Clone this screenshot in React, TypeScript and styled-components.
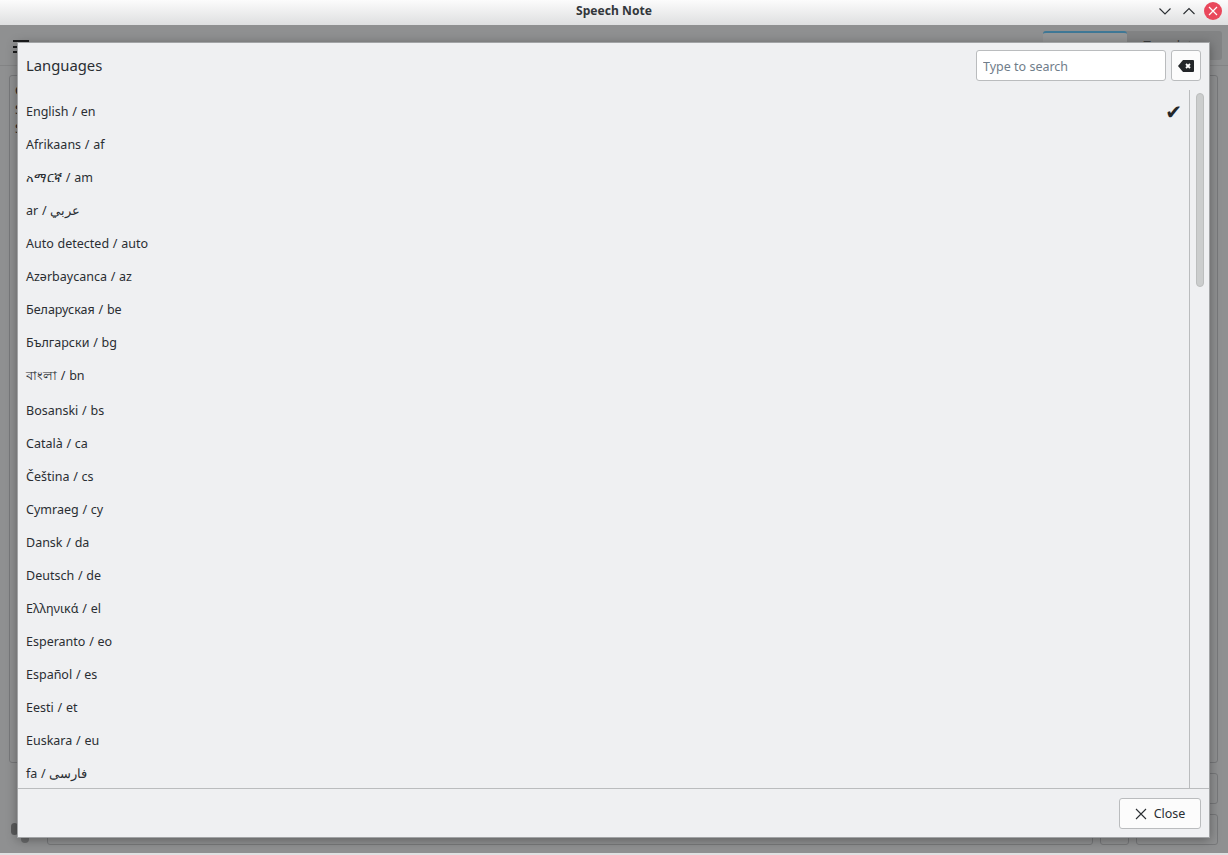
import React from 'react';
import styled, { createGlobalStyle } from 'styled-components';

const Global = createGlobalStyle`
  html, body { margin: 0; padding: 0; width: 1228px; height: 855px; overflow: hidden; background: #8f9091; }
  * { box-sizing: border-box; }
`;

const Window = styled.div`
  position: relative;
  width: 1228px;
  height: 855px;
  display: flex;
  flex-direction: column;
  font-family: "Noto Sans", "Noto Sans CJK SC", sans-serif;
  color: #2a2e32;
  overflow: hidden;
`;

const TitleBar = styled.div`
  height: 25px;
  flex: none;
  display: flex;
  align-items: flex-start;
  justify-content: center;
  padding-top: 2px;
  position: relative;
  background: linear-gradient(#fcfcfc, #dedfe0);
`;

const Title = styled.div`
  font-size: 12.1px;
  line-height: 17px;
  font-weight: 700;
  color: #33373b;
`;

const WinControls = styled.div`
  position: absolute;
  right: 6px;
  top: 2px;
  display: flex;
  align-items: center;
  gap: 6px;
`;

const CloseCircle = styled.div`
  width: 18px;
  height: 18px;
  border-radius: 50%;
  background: #e9475b;
  display: flex;
  align-items: center;
  justify-content: center;
`;

const Backdrop = styled.div`
  flex: 1;
  min-height: 0;
  background: #8f9091;
  display: flex;
  flex-direction: column;
  padding: 0 10px 10px 9px;
`;

const BackToolbar = styled.div`
  height: 41px;
  flex: none;
  margin: 0 -10px 0 -9px;
  padding: 6px 6px 0 13px;
  display: flex;
  align-items: flex-start;
  border-bottom: 1px solid #838485;
`;

const Burger = styled.div`
  width: 16px;
  height: 13px;
  margin-top: 9px;
  flex: none;
  border-top: 2px solid #1c1d1e;
  border-bottom: 2px solid #1c1d1e;
  position: relative;
  &::after {
    content: "";
    position: absolute;
    left: 0;
    right: 0;
    top: 3.5px;
    height: 2px;
    background: #1c1d1e;
  }
`;

const BackLabel = styled.div`
  flex: 1;
  margin: 8px 0 0 22px;
  font-size: 13px;
  line-height: 18px;
  color: #3c3d3e;
`;

const BackTabs = styled.div`
  display: flex;
  height: 29px;
  background: #828384;
  border-radius: 3px;
`;

const BackTab = styled.div<{ $active?: boolean }>`
  width: ${(p) => (p.$active ? '84px' : '95px')};
  border-radius: 3px 3px 0 0;
  background: ${(p) => (p.$active ? '#959697' : 'transparent')};
  border-top: ${(p) => (p.$active ? '2px solid #3f7896' : 'none')};
  font-size: 13px;
  line-height: 28px;
  text-align: center;
  color: #3c3d3e;
`;

const BackPanel = styled.div`
  flex: 1;
  margin-top: 9px;
  border: 1px solid #77787a;
  border-radius: 3px;
  padding: 5px 5px;
  font-size: 13px;
  line-height: 19px;
  color: #222;
`;

const BackRow = styled.div`
  flex: none;
  display: flex;
  justify-content: flex-end;
  margin-top: 10px;
`;

const BackControls = styled.div`
  flex: none;
  display: flex;
  align-items: flex-end;
  gap: 7px;
  margin-top: 10px;
  height: 31px;
`;

const BackBlobs = styled.div`
  width: 19px;
  flex: none;
  margin-left: 2px;
  margin-right: 10px;
  height: 31px;
  display: flex;
  align-items: flex-start;
  gap: 3px;
`;

const BackBlob = styled.div<{ $low?: boolean }>`
  width: ${(p) => (p.$low ? '8px' : '7px')};
  height: 12px;
  margin-top: ${(p) => (p.$low ? '17px' : '9px')};
  border-radius: 4px;
  flex: none;
  background: ${(p) => (p.$low ? '#6a6b6c' : '#5a5b5c')};
`;

const BackBox = styled.div<{ $w?: number }>`
  height: 31px;
  flex: ${(p) => (p.$w ? 'none' : '1')};
  width: ${(p) => (p.$w ? `${p.$w}px` : 'auto')};
  border: 1px solid #77787a;
  border-radius: 3px;
`;

const BottomEdge = styled.div`
  position: absolute;
  left: 0;
  right: 0;
  bottom: 0;
  height: 2px;
  background: #e0e1e2;
`;

const Dialog = styled.div`
  position: absolute;
  left: 17px;
  top: 42px;
  width: 1193px;
  height: 796px;
  background: #eff0f2;
  border: 1px solid #a2a4a6;
  box-shadow: 0 2px 10px rgba(0, 0, 0, 0.35);
  display: flex;
  flex-direction: column;
`;

const DialogHeader = styled.div`
  height: 47px;
  flex: none;
  display: flex;
  align-items: flex-start;
  justify-content: space-between;
  padding: 7px 8px 0 8px;
`;

const Heading = styled.div`
  font-size: 14.8px;
  line-height: 30px;
  color: #2a2e32;
`;

const SearchGroup = styled.div`
  display: flex;
  gap: 5px;
`;

const SearchInput = styled.input`
  width: 190px;
  height: 31px;
  padding: 1px 6px 0;
  background: #fff;
  border: 1px solid #babcbe;
  border-radius: 3px;
  font: 12.5px "Noto Sans", sans-serif;
  color: #2a2e32;
  outline: none;
  &::placeholder { color: #707d8a; opacity: 1; }
`;

const ClearButton = styled.div`
  width: 30px;
  height: 31px;
  background: #fcfcfc;
  border: 1px solid #babcbe;
  border-radius: 3px;
  display: flex;
  align-items: center;
  justify-content: center;
`;

const Body = styled.div`
  flex: 1;
  min-height: 0;
  display: flex;
  overflow: hidden;
`;

const List = styled.div`
  flex: 1;
  min-width: 0;
  padding-top: 5px;
  overflow: hidden;
`;

const Row = styled.div<{ $tall?: boolean }>`
  height: ${(p) => (p.$tall ? '35px' : '33px')};
  padding: 0 7px 0 8px;
  display: flex;
  align-items: center;
  justify-content: space-between;
  font-size: 12.5px;
  word-spacing: 0.5px;
  color: #2a2e32;
`;

const Check = styled.span`
  font-family: "DejaVu Sans", sans-serif;
  font-size: 20px;
  line-height: 20px;
  color: #232629;
`;

const ScrollTrack = styled.div`
  width: 20px;
  flex: none;
  border-left: 1px solid #babcbe;
  padding: 3px 5px 0 6px;
`;

const ScrollThumb = styled.div`
  width: 8px;
  height: 194px;
  background: #cbcdcd;
  border: 1px solid #bcbebe;
  border-radius: 4px;
`;

const Footer = styled.div`
  height: 49px;
  flex: none;
  border-top: 1px solid #babcbe;
  display: flex;
  justify-content: flex-end;
  padding: 9px 8px 0 0;
`;

const CloseButton = styled.div`
  width: 82px;
  height: 31px;
  background: #fcfcfc;
  border: 1px solid #babcbe;
  border-radius: 3px;
  display: flex;
  align-items: center;
  justify-content: center;
  gap: 7px;
  font-size: 12.5px;
  color: #2a2e32;
`;

const languages = [
  'English / en', 'Afrikaans / af', 'አማርኛ / am', 'ar / عربي', 'Auto detected / auto',
  'Azərbaycanca / az', 'Беларуская / be', 'Български / bg', 'বাংলা / bn', 'Bosanski / bs',
  'Català / ca', 'Čeština / cs', 'Cymraeg / cy', 'Dansk / da', 'Deutsch / de',
  'Ελληνικά / el', 'Esperanto / eo', 'Español / es', 'Eesti / et', 'Euskara / eu', 'fa / فارسی',
];

export default function App() {
  return (
    <Window>
      <Global />
      <TitleBar>
        <Title>Speech Note</Title>
        <WinControls>
          <svg width="18" height="18" viewBox="0 0 18 18" fill="none" stroke="#2a2e32" strokeWidth="1.1"><path d="M3.5 6.5l5.5 5.5 5.5-5.5" /></svg>
          <svg width="18" height="18" viewBox="0 0 18 18" fill="none" stroke="#2a2e32" strokeWidth="1.1"><path d="M3.5 12L9 6.5l5.5 5.5" /></svg>
          <CloseCircle>
            <svg width="10" height="10" viewBox="0 0 10 10" stroke="#fff" strokeWidth="1.2"><path d="M1 1l8 8M9 1l-8 8" /></svg>
          </CloseCircle>
        </WinControls>
      </TitleBar>
      <Backdrop>
        <BackToolbar>
          <Burger />
          <BackLabel>Listening to speech, text will appear here</BackLabel>
          <BackTabs>
            <BackTab $active>Note taking</BackTab>
            <BackTab>Translator</BackTab>
          </BackTabs>
        </BackToolbar>
        <BackPanel>C<br />S<br />S</BackPanel>
        <BackRow><BackBox $w={60} /></BackRow>
        <BackControls>
          <BackBlobs><BackBlob /><BackBlob $low /></BackBlobs>
          <BackBox />
          <BackBox $w={29} />
          <BackBox $w={82} />
        </BackControls>
      </Backdrop>
      <BottomEdge />
      <Dialog>
        <DialogHeader>
          <Heading>Languages</Heading>
          <SearchGroup>
            <SearchInput placeholder="Type to search" />
            <ClearButton>
              <svg width="16" height="12" viewBox="0 0 16 12"><path d="M5 0h10a1 1 0 0 1 1 1v10a1 1 0 0 1-1 1H5L0 6z" fill="#232629" /><path d="M8 4l4 4M12 4l-4 4" stroke="#fff" strokeWidth="1.8" /></svg>
            </ClearButton>
          </SearchGroup>
        </DialogHeader>
        <Body>
          <List>
            {languages.map((l, i) => (
              <Row key={l} $tall={l.startsWith('বাংলা')}>
                <span>{l}</span>
                {i === 0 && <Check>✔</Check>}
              </Row>
            ))}
          </List>
          <ScrollTrack><ScrollThumb /></ScrollTrack>
        </Body>
        <Footer>
          <CloseButton>
            <svg width="12" height="12" viewBox="0 0 12 12" stroke="#2a2e32" strokeWidth="1.1"><path d="M1 1l10 10M11 1L1 11" /></svg>
            Close
          </CloseButton>
        </Footer>
      </Dialog>
    </Window>
  );
}
